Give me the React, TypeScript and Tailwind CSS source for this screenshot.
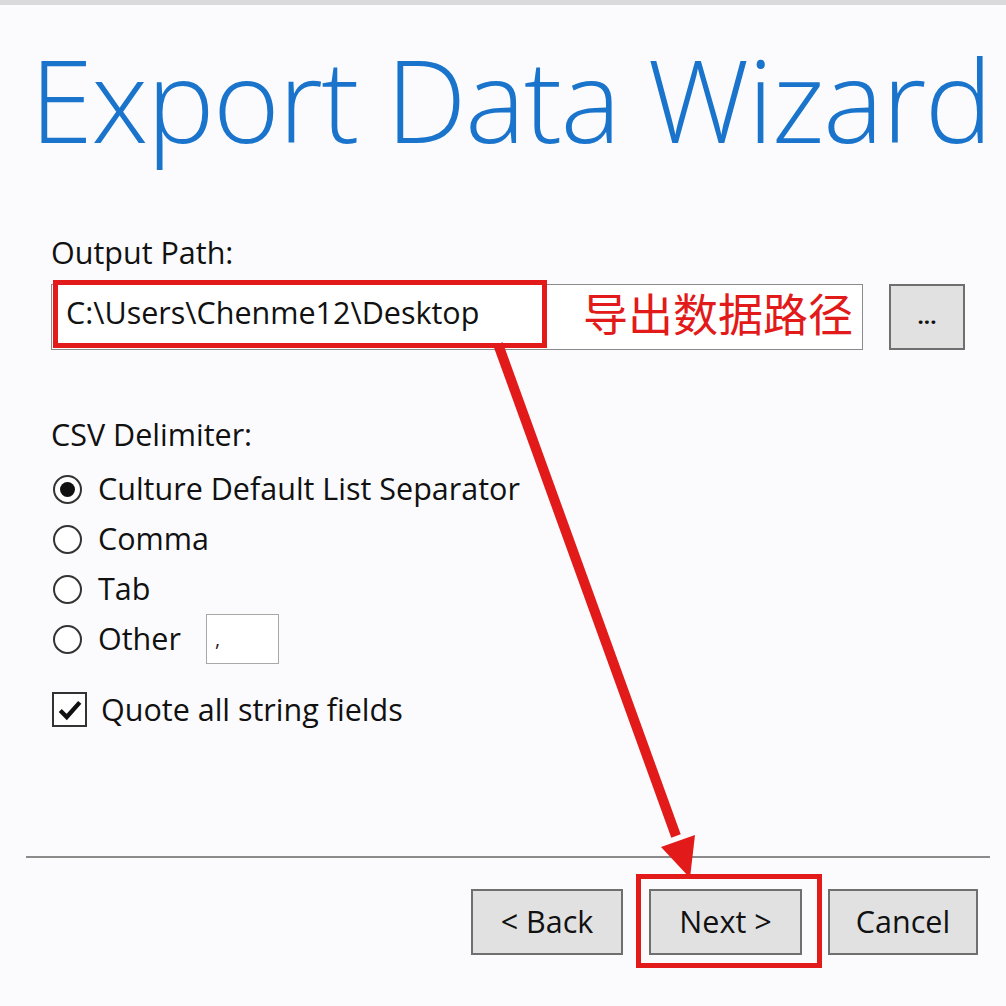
import React from 'react';

const Radio: React.FC<{ checked?: boolean; label: string; children?: React.ReactNode }> = ({ checked, label, children }) => (
  <div className="flex items-center h-[50px]">
    <span className="w-[29px] h-[29px] rounded-full border-2 border-[#333] bg-white flex items-center justify-center ml-[53px]">
      {checked && <span className="w-[15px] h-[15px] rounded-full bg-[#111]" />}
    </span>
    <span className="ml-[16px] text-[30.5px] text-[#111]">{label}</span>
    {children}
  </div>
);

const WizButton: React.FC<{ label: string; w: string }> = ({ label, w }) => (
  <div className={`${w} h-[66px] bg-[#e1e1e1] border-2 border-[#6f6f6f] flex items-center justify-center text-[30.5px] text-[#111]`}>
    {label}
  </div>
);

export default function App() {
  return (
    <div
      className="relative w-[1006px] h-[1006px] bg-[#fbfbfd] overflow-hidden flex flex-col"
      style={{ fontFamily: '"Open Sans", "Noto Sans CJK SC", sans-serif' }}
    >
      <div className="h-[5px] bg-[#dadadc]" />

      {/* title */}
      <h1 className="ml-[30px] mt-[24px] text-[#1a74cc] text-[114px] font-light leading-[140px] tracking-[-1.5px] whitespace-nowrap">
        Export Data Wizard
      </h1>

      {/* output path */}
      <div className="mt-[65px] ml-[51px] text-[30.5px] leading-[36px] text-[#111]">Output Path:</div>
      <div className="mt-[14px] ml-[51px] flex items-center">
        <div className="relative w-[812px] h-[66px] border border-[#8a8a8a] bg-white flex items-center">
          <span className="ml-[14px] mb-[8px] text-[30.5px] text-[#111]">C:\Users\Chenme12\Desktop</span>
          <div className="absolute left-[1px] top-[-5px] w-[494px] h-[68px] border-[5px] border-[#e21a1a]" />
          <span className="absolute left-[531px] top-[3px] text-[45px] leading-[54px] text-[#e21a1a]">导出数据路径</span>
        </div>
        <div className="ml-[26px] w-[76px] h-[66px] bg-[#e1e1e1] border-2 border-[#6f6f6f] flex items-center justify-center text-[22px] font-bold text-[#111] pb-[4px]">
          ...
        </div>
      </div>

      {/* delimiter */}
      <div className="mt-[66px] ml-[51px] text-[30.5px] leading-[36px] text-[#111]">CSV Delimiter:</div>
      <div className="mt-[12px]">
        <Radio checked label="Culture Default List Separator" />
        <Radio label="Comma" />
        <Radio label="Tab" />
        <Radio label="Other">
          <div className="ml-[25px] w-[73px] h-[50px] border border-[#a8a8a8] bg-white flex items-center pl-[8px] text-[20px] text-[#222]">
            ,
          </div>
        </Radio>
      </div>
      <div className="mt-[23px] ml-[52px] flex items-center">
        <span className="w-[35px] h-[35px] border-2 border-[#333] bg-white flex items-center justify-center">
          <svg width="26" height="26" viewBox="0 0 24 24">
            <path d="M3 12.5 L9 18.5 L21 5" fill="none" stroke="#111" strokeWidth="4" />
          </svg>
        </span>
        <span className="ml-[14px] text-[30.5px] text-[#111]">Quote all string fields</span>
      </div>

      {/* footer */}
      <div className="mt-auto ml-[26px] mr-[16px] h-[2px] bg-[#8a8a8a]" />
      <div className="mt-[31px] mb-[51px] mr-[28px] flex justify-end gap-[26px]">
        <WizButton label="< Back" w="w-[152px]" />
        <div className="relative">
          <WizButton label="Next >" w="w-[153px]" />
          <div className="absolute left-[-13px] top-[-15px] w-[186px] h-[94px] border-[5px] border-[#e21a1a]" />
        </div>
        <WizButton label="Cancel" w="w-[150px]" />
      </div>

      {/* arrow annotation */}
      <svg className="absolute left-0 top-0 pointer-events-none" width="1006" height="1006">
        <line x1="498" y1="344" x2="676" y2="836" stroke="#e21a1a" strokeWidth="10" />
        <polygon points="690,878 661,847 695,835" fill="#e21a1a" />
      </svg>
    </div>
  );
}
